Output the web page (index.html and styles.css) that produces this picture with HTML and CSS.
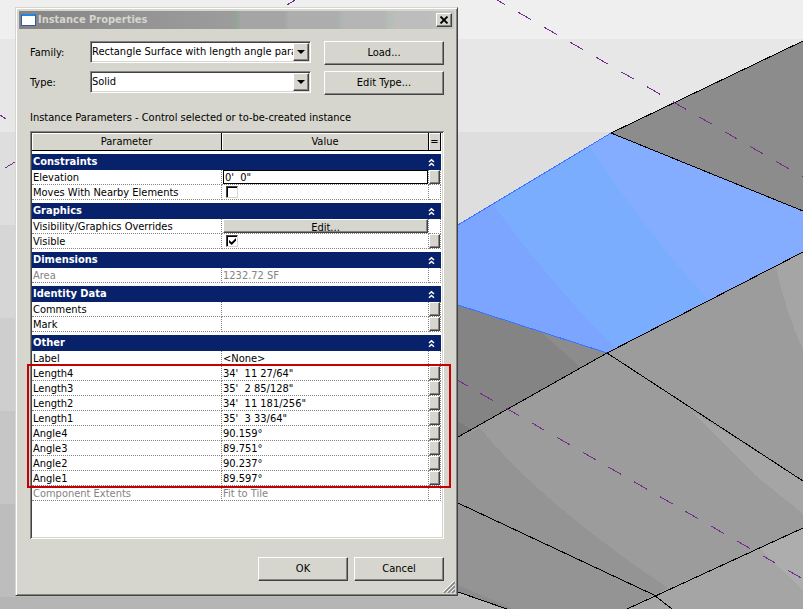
FILE: index.html
```html
<!DOCTYPE html>
<html lang="en">
<head>
<meta charset="utf-8">
<title>Instance Properties</title>
<link rel="stylesheet" href="styles.css">
</head>
<body>
<svg class="scene" viewBox="0 0 803 609" preserveAspectRatio="xMidYMid slice" shape-rendering="crispEdges" aria-hidden="true">
  <path fill="#efefef" d="M0 0H803V39H0z"/>
  <path fill="#e7e7e7" d="M0 39H803V132H0z"/>
  <path fill="#dedede" d="M0 132H803V225H0z"/>
  <path fill="#d6d6d6" d="M0 225H803V318H0z"/>
  <path fill="#cecece" d="M0 318H803V411H0z"/>
  <path fill="#c6c6c6" d="M0 411H803V504H0z"/>
  <path fill="#bdbdbd" d="M0 504H803V597H0z"/>
  <path fill="#b5b5b5" d="M0 597H803V609H0z"/>
  <path fill="#8c8c8c" d="M611 133L803 41V211z"/>
  <path fill="#84adff" d="M458 225L611 133L803 211V252L607 353L458 305z"/>
  <path fill="#7badff" d="M493 204L590 147Q645 230 708 300L607 353L493 316z"/>
  <path fill="#7ba5ff" d="M458 225L493 204Q546 278 615 348L607 353L458 305z"/>
  <path fill="#848484" d="M458 305L607 353L458 437z"/>
  <path fill="#8c8c8c" d="M541 332L580 367L607 353z"/>
  <path fill="#7b7b7b" d="M458 422L471 429L458 437z"/>
  <path fill="#9c9c9c" d="M607 353L803 252V528L654 595L458 503V437z"/>
  <path fill="#a5a5a5" d="M776 267L803 252V350Q785 310 776 267z"/>
  <path fill="#a5a5a5" d="M693 412L755 475L803 514V481z"/>
  <path fill="#949494" d="M458 437L480 428Q540 502 668 588L654 595L458 503z"/>
  <path fill="#949494" d="M458 503L654 595L627 609H507L458 592z"/>
  <path fill="#8c8c8c" d="M458 585L514 609H507L458 592z"/>
  <path fill="#a5a5a5" d="M654 595L803 528V609H627z"/>
  <path fill="#adadad" d="M759 548L803 528V590z"/>
  <g fill="none" stroke="#000">
    <path d="M803 41L611 133L803 211M803 252L607 353L458 437M607 353L803 481M458 503L654 595L672 609M803 528L627 609M458 592L507 609"/>
  </g>
  <path fill="none" stroke="#3973ff" d="M611 133L458 225M458 305L607 353"/>
  <g fill="none" stroke="#732c8c">
    <path stroke-dasharray="14.8 15" d="M492.5 -2.7L803 177"/>
    <path stroke-dasharray="14.8 14.8" d="M454.6 378.5L803 579"/>
    <path d="M0 115L6 119M5 168L15 162M287 5L295 0"/>
  </g>
</svg>

<main class="dialog" role="dialog" aria-labelledby="title">
  <header class="titlebar">
    <span class="app-icon"></span>
    <h1 id="title">Instance Properties</h1>
    <button class="raised close" type="button" aria-label="Close">
      <svg width="10" height="8" viewBox="0 0 10 8" aria-hidden="true"><path d="M1.5 .5L8.5 7.5M8.5 .5L1.5 7.5" stroke="#000" stroke-width="1.8"/></svg>
    </button>
  </header>

  <form class="content">
    <div class="picker">
      <label for="family">Family:</label>
      <div class="combo">
        <select id="family"><option>Rectangle Surface with length angle parameters</option></select>
        <span class="raised arrow"></span>
      </div>
      <button class="raised push" type="button">Load...</button>
      <label for="type">Type:</label>
      <div class="combo">
        <select id="type"><option>Solid</option></select>
        <span class="raised arrow"></span>
      </div>
      <button class="raised push" type="button">Edit Type...</button>
    </div>

    <p class="caption" id="caption">Instance Parameters - Control selected or to-be-created instance</p>

    <div class="panel">
      <table aria-labelledby="caption">
        <colgroup><col class="col-name"><col><col class="col-more"></colgroup>
        <thead>
          <tr><th>Parameter</th><th>Value</th><th>=</th></tr>
        </thead>
        <tbody>
          <tr class="group"><th colspan="3"><button type="button">Constraints<svg class="chevron" viewBox="0 0 5 7"><path d="M0 3L2.5 .7L5 3M0 6.8L2.5 4.5L5 6.8"/></svg></button></th></tr>
          <tr><td><label for="elevation">Elevation</label></td><td><input class="edit" id="elevation" type="text" value="0'  0&quot;"></td><td><button class="raised more" type="button" aria-label="Elevation options"></button></td></tr>
          <tr><td><label for="moves">Moves With Nearby Elements</label></td><td><input id="moves" type="checkbox"></td><td></td></tr>
        </tbody>
        <tbody>
          <tr class="group"><th colspan="3"><button type="button">Graphics<svg class="chevron" viewBox="0 0 5 7"><path d="M0 3L2.5 .7L5 3M0 6.8L2.5 4.5L5 6.8"/></svg></button></th></tr>
          <tr><td>Visibility/Graphics Overrides</td><td><button class="raised override" type="button">Edit...</button></td><td></td></tr>
          <tr><td><label for="visible">Visible</label></td><td><input id="visible" type="checkbox" checked></td><td><button class="raised more" type="button" aria-label="Visible options"></button></td></tr>
        </tbody>
        <tbody>
          <tr class="group"><th colspan="3"><button type="button">Dimensions<svg class="chevron" viewBox="0 0 5 7"><path d="M0 3L2.5 .7L5 3M0 6.8L2.5 4.5L5 6.8"/></svg></button></th></tr>
          <tr class="readonly"><td>Area</td><td>1232.72 SF</td><td></td></tr>
        </tbody>
        <tbody>
          <tr class="group"><th colspan="3"><button type="button">Identity Data<svg class="chevron" viewBox="0 0 5 7"><path d="M0 3L2.5 .7L5 3M0 6.8L2.5 4.5L5 6.8"/></svg></button></th></tr>
          <tr><td>Comments</td><td></td><td><button class="raised more" type="button" aria-label="Comments options"></button></td></tr>
          <tr><td>Mark</td><td></td><td><button class="raised more" type="button" aria-label="Mark options"></button></td></tr>
        </tbody>
        <tbody>
          <tr class="group"><th colspan="3"><button type="button">Other<svg class="chevron" viewBox="0 0 5 7"><path d="M0 3L2.5 .7L5 3M0 6.8L2.5 4.5L5 6.8"/></svg></button></th></tr>
          <tr><td>Label</td><td>&lt;None&gt;</td><td></td></tr>
        </tbody>
        <tbody class="marked">
          <tr><td>Length4</td><td>34'  11 27/64"</td><td><button class="raised more" type="button" aria-label="Length4 options"></button></td></tr>
          <tr><td>Length3</td><td>35'  2 85/128"</td><td><button class="raised more" type="button" aria-label="Length3 options"></button></td></tr>
          <tr><td>Length2</td><td>34'  11 181/256"</td><td><button class="raised more" type="button" aria-label="Length2 options"></button></td></tr>
          <tr><td>Length1</td><td>35'  3 33/64"</td><td><button class="raised more" type="button" aria-label="Length1 options"></button></td></tr>
          <tr><td>Angle4</td><td>90.159°</td><td><button class="raised more" type="button" aria-label="Angle4 options"></button></td></tr>
          <tr><td>Angle3</td><td>89.751°</td><td><button class="raised more" type="button" aria-label="Angle3 options"></button></td></tr>
          <tr><td>Angle2</td><td>90.237°</td><td><button class="raised more" type="button" aria-label="Angle2 options"></button></td></tr>
          <tr><td>Angle1</td><td>89.597°</td><td><button class="raised more" type="button" aria-label="Angle1 options"></button></td></tr>
        </tbody>
        <tbody>
          <tr class="readonly"><td>Component Extents</td><td>Fit to Tile</td><td></td></tr>
        </tbody>
      </table>
    </div>

    <div class="actions">
      <button class="raised push" type="button">OK</button>
      <button class="raised push" type="button">Cancel</button>
    </div>
  </form>
  <svg class="grip" viewBox="0 0 12 12" aria-hidden="true">
    <path stroke="#fff" d="M0 11L11 0M4 11L11 4M8 11L11 8"/>
    <path stroke="#848484" stroke-width="1.6" d="M1 12L12 1M5 12L12 5M9 12L12 9"/>
  </svg>
</main>
</body>
</html>
```
FILE: styles.css
```css
:root {
  --face: #d6d6ce;
  --shade: #848484;
  --dark: #424242;
  --navy: #08216b;
}

* { box-sizing: border-box; }

body {
  margin: 0;
  min-height: 100vh;
  padding: 7px 15px;
  overflow: hidden;
  font: 11px/14px "DejaVu Sans Condensed", "DejaVu Sans", sans-serif;
  color: #000;
}

button, input, select {
  font: inherit;
  color: inherit;
  margin: 0;
  padding: 0;
  border: 0;
  border-radius: 0;
  appearance: none;
}

.scene {
  position: fixed;
  inset: 0;
  width: 100%;
  height: 100%;
  z-index: -1;
}

.raised {
  background: var(--face);
  border: 1px solid;
  border-color: #fff var(--dark) var(--dark) #fff;
  box-shadow: inset -1px -1px var(--shade);
}

.dialog {
  position: relative;
  max-width: 443px;
  padding: 3px;
  background: var(--face);
  border: 1px solid;
  border-color: var(--face) var(--dark) var(--dark) var(--face);
  box-shadow: inset 1px 1px #fff, inset -1px -1px var(--shade);
}

.titlebar {
  display: flex;
  align-items: center;
  gap: 2px;
  height: 18px;
  padding: 0 2px;
  background: linear-gradient(90deg, #848484, #8c8c8c 15%, #949494 28%, #9c9c9c 49%, #94a594 50%, #a5a5a5 51%, #a5a5a5 61%, #adadad 62%, #adadad 73%, #adb5ad 74%, #b5b5b5 75%, #b5b5b5 84%, #b5bdb5 85%, #bdbdbd 87%, #bdbdbd 94%, #c6c6c6);
}

.titlebar h1 {
  flex: 1;
  margin: 0;
  font-size: 11px;
  line-height: 18px;
  color: var(--face);
}

.app-icon {
  width: 15px;
  height: 12px;
  background: #fff;
  border: 1px solid #315aa5;
  border-top: 2px solid #2184e7;
}

.close {
  display: grid;
  place-items: center;
  width: 16px;
  height: 14px;
}

.content { padding: 12px 10px 11px 11px; }

.picker {
  display: grid;
  grid-template-columns: 60px 1fr 120px;
  row-gap: 6px;
}

.picker label { line-height: 24px; }

.combo {
  position: relative;
  height: 22px;
  margin-right: 13px;
}

.combo select {
  display: block;
  width: 100%;
  height: 100%;
  padding: 0 17px 0 1px;
  background: #fff;
  border: 1px solid;
  border-color: var(--shade) #fff #fff var(--shade);
  box-shadow: inset 1px 1px var(--dark), inset -1px -1px var(--face);
}

.arrow {
  position: absolute;
  top: 2px;
  right: 2px;
  bottom: 2px;
  width: 16px;
  display: grid;
  place-items: center;
  pointer-events: none;
}

.arrow::before {
  content: "";
  border: 4px solid transparent;
  border-top-color: #000;
  border-bottom: 0;
}

.push { height: 24px; text-align: center; }

.caption { margin: 15px 0 5px; line-height: 16px; }

.panel {
  min-height: 408px;
  padding: 2px 3px 2px 2px;
  background: #fff;
  box-shadow: inset 1px 1px var(--shade), inset -1px -1px #fff, inset 2px 2px var(--dark), inset -2px -2px var(--face);
}

table {
  width: 100%;
  table-layout: fixed;
  border-collapse: separate;
  border-spacing: 0;
}

.col-name { width: 190px; }
.col-more { width: 12px; }

th, td { padding: 0; white-space: pre; }

thead th {
  height: 18px;
  font-weight: normal;
  background: var(--face);
  border-right: 1px solid #000;
  border-bottom: 1px solid #000;
  box-shadow: inset 1px 1px #fff;
}

.group th { border-top: 3px solid #fff; }

.group button {
  display: flex;
  align-items: center;
  justify-content: space-between;
  width: 100%;
  height: 16px;
  padding: 0 7px 0 1px;
  font-weight: bold;
  color: #fff;
  background: var(--navy);
}

.chevron {
  width: 5px;
  height: 7px;
  fill: none;
  stroke: #fff;
  stroke-width: 1.5;
  overflow: visible;
}

td {
  height: 15px;
  padding: 1px 0 0 1px;
  line-height: 13px;
  vertical-align: top;
  border-right: 1px dotted var(--shade);
  border-bottom: 1px dotted var(--shade);
}

td:nth-child(2) { padding-left: 1px; }
td:has(input, button) { padding: 0; }

.readonly { color: var(--shade); }

.edit {
  display: block;
  width: 100%;
  height: 14px;
  padding-left: 1px;
  background: #fff;
  border: 1px solid #000;
}

.more { display: block; width: 11px; height: 14px; }

.override {
  display: block;
  width: 100%;
  height: 14px;
  padding-top: 1px;
  line-height: 14px;
  overflow: hidden;
}

input[type="checkbox"] {
  display: block;
  width: 12px;
  height: 12px;
  margin: 1px 0 0 3px;
  background: #fff;
  border: 1px solid;
  border-color: var(--dark) var(--face) var(--face) var(--dark);
  box-shadow: inset 1px 1px #000;
}

input[type="checkbox"]:checked::before {
  content: "";
  display: block;
  width: 7px;
  height: 7px;
  margin: 2px;
  background: #000;
  clip-path: polygon(0 28%, 38% 62%, 100% 0, 100% 40%, 38% 100%, 0 66%);
}

.marked { position: relative; }

.marked::after {
  content: "";
  position: absolute;
  inset: -2px -10px -2px -5px;
  border: 2px solid #c60000;
  pointer-events: none;
}

.actions {
  display: flex;
  justify-content: flex-end;
  gap: 6px;
  margin-top: 18px;
}

.actions .push { width: 90px; }

.grip {
  position: absolute;
  right: 2px;
  bottom: 2px;
  width: 12px;
  height: 12px;
  fill: none;
}
```
